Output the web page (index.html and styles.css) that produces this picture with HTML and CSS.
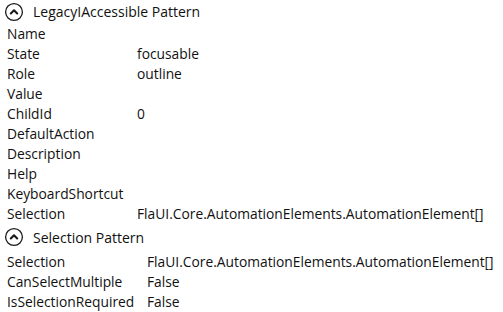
FILE: index.html
```html
<!DOCTYPE html>
<html>
<head>
<meta charset="utf-8">
<link rel="stylesheet" href="styles.css">
</head>
<body>
<div class="panel">
  <div class="header first">
    <svg class="toggle" width="20" height="20" viewBox="0 0 20 20"><circle cx="10" cy="10" r="8.4" fill="none" stroke="#1a1a1a" stroke-width="1.3"/><path d="M6.8 11.5 L10 8.3 L13.2 11.5" fill="none" stroke="#1a1a1a" stroke-width="2.1" stroke-linecap="round" stroke-linejoin="round"/></svg>
    <span class="title">LegacyIAccessible Pattern</span>
  </div>
  <div class="grid g1">
    <span>Name</span><span></span>
    <span>State</span><span>focusable</span>
    <span>Role</span><span>outline</span>
    <span>Value</span><span></span>
    <span>ChildId</span><span>0</span>
    <span>DefaultAction</span><span></span>
    <span>Description</span><span></span>
    <span>Help</span><span></span>
    <span>KeyboardShortcut</span><span></span>
    <span>Selection</span><span>FlaUI.Core.AutomationElements.AutomationElement[]</span>
  </div>
  <div class="header second">
    <svg class="toggle" width="20" height="20" viewBox="0 0 20 20"><circle cx="10" cy="10" r="8.4" fill="none" stroke="#1a1a1a" stroke-width="1.3"/><path d="M6.8 11.5 L10 8.3 L13.2 11.5" fill="none" stroke="#1a1a1a" stroke-width="2.1" stroke-linecap="round" stroke-linejoin="round"/></svg>
    <span class="title">Selection Pattern</span>
  </div>
  <div class="grid g2">
    <span>Selection</span><span>FlaUI.Core.AutomationElements.AutomationElement[]</span>
    <span>CanSelectMultiple</span><span>False</span>
    <span>IsSelectionRequired</span><span>False</span>
  </div>
</div>
</body>
</html>
```
FILE: styles.css
```css
html, body {
  margin: 0;
  padding: 0;
  background: #ffffff;
}
body {
  font-family: "Open Sans", "Noto Sans", sans-serif;
  color: #111111;
  overflow: hidden;
}
.panel {
  width: 503px;
  height: 312px;
}
.header {
  display: flex;
  align-items: center;
  gap: 9px;
  padding-left: 4px;
}
.header.first {
  height: 23px;
}
.header.second {
  height: 28px;
}
.toggle {
  flex: none;
}
.title {
  font-size: 14px;
}
.grid {
  display: grid;
  padding-left: 7px;
  font-size: 13.8px;
  grid-auto-rows: 20px;
  align-items: center;
}
.g1 {
  grid-template-columns: 130px 1fr;
}
.g2 {
  grid-template-columns: 140px 1fr;
}
.grid span {
  white-space: nowrap;
}
```
